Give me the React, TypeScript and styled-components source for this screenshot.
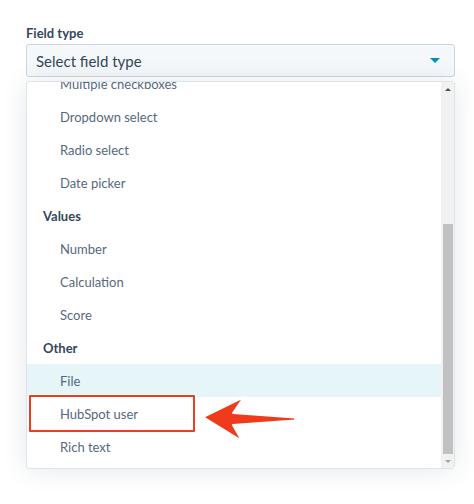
import React from 'react';
import styled, { createGlobalStyle } from 'styled-components';

const GlobalStyle = createGlobalStyle`
  html, body {
    margin: 0;
    padding: 0;
    background: #ffffff;
  }
  body {
    font-family: Lato, "Open Sans", sans-serif;
  }
`;

const Page = styled.div`
  width: 474px;
  height: 504px;
  padding: 25px 19px 0 26px;
  box-sizing: border-box;
  display: flex;
  flex-direction: column;
`;

const Label = styled.div`
  font-size: 13px;
  font-weight: 700;
  color: #33475b;
  line-height: 16px;
  margin-bottom: 3px;
`;

const SelectBox = styled.div`
  height: 33px;
  box-sizing: border-box;
  border: 1px solid #cbd6e2;
  border-radius: 3px;
  background: #f5f8fa;
  display: flex;
  align-items: center;
  justify-content: space-between;
  padding: 0 14px 0 9px;
  font-size: 15px;
  color: #33475b;
`;

const Caret = styled.span`
  width: 0;
  height: 0;
  border-left: 5px solid transparent;
  border-right: 5px solid transparent;
  border-top: 5px solid #0091ae;
`;

const Dropdown = styled.div`
  margin-top: 4px;
  height: 388px;
  box-sizing: border-box;
  border: 1px solid #dfe3eb;
  border-radius: 3px;
  background: #ffffff;
  box-shadow: 0 1px 24px rgba(45, 62, 80, 0.12);
  display: flex;
`;

const List = styled.ul`
  flex: 1;
  list-style: none;
  margin: 0;
  padding: 0;
  overflow: hidden;
`;

const Group = styled.li`
  height: 33px;
  display: flex;
  align-items: center;
  padding-left: 16px;
  font-size: 13px;
  font-weight: 700;
  color: #33475b;
`;

const Option = styled.li<{ $active?: boolean; $first?: boolean }>`
  position: relative;
  height: 33px;
  display: flex;
  align-items: center;
  padding-left: 33px;
  margin-top: ${p => (p.$first ? '-15px' : '0')};
  font-size: 13px;
  color: #56697f;
  background: ${p => (p.$active ? '#e5f5f8' : 'transparent')};
`;

const Marker = styled.span`
  position: absolute;
  left: 2px;
  top: -2px;
  width: 166px;
  height: 37px;
  box-sizing: border-box;
  border: 2px solid #ec3e1e;
  border-radius: 1px;
  box-shadow: 0 0 0 1px rgba(255, 255, 255, 0.8);
`;

const Pointer = styled.svg`
  position: absolute;
  left: 170px;
  top: -6px;
  overflow: visible;
`;

const Scrollbar = styled.div`
  width: 13px;
  background: #f1f1f1;
  display: flex;
  flex-direction: column;
  align-items: center;
`;

const ScrollArrow = styled.span<{ $down?: boolean }>`
  height: 14px;
  display: flex;
  align-items: center;
  justify-content: center;
  &::after {
    content: '';
    border-left: 3px solid transparent;
    border-right: 3px solid transparent;
    ${p =>
      p.$down
        ? 'border-top: 3px solid #a3a3a3;'
        : 'border-bottom: 3px solid #505050;'}
  }
`;

const Track = styled.div`
  flex: 1;
  width: 100%;
  display: flex;
  flex-direction: column;
  justify-content: flex-end;
  align-items: center;
`;

const Thumb = styled.div`
  width: 10px;
  background: #c1c1c1;
`;

type Item = { label: string; kind: 'group' | 'option'; active?: boolean; marked?: boolean };

// list is shown scrolled to the bottom, so it starts half way through "Multiple checkboxes"
const items: Item[] = [
  { label: 'Multiple checkboxes', kind: 'option' },
  { label: 'Dropdown select', kind: 'option' },
  { label: 'Radio select', kind: 'option' },
  { label: 'Date picker', kind: 'option' },
  { label: 'Values', kind: 'group' },
  { label: 'Number', kind: 'option' },
  { label: 'Calculation', kind: 'option' },
  { label: 'Score', kind: 'option' },
  { label: 'Other', kind: 'group' },
  { label: 'File', kind: 'option', active: true },
  { label: 'HubSpot user', kind: 'option', marked: true },
  { label: 'Rich text', kind: 'option' },
];

const Arrow: React.FC = () => (
  <Pointer width="100" height="52" viewBox="0 0 100 52">
    <polygon
      points="6,26 47,6 36,22 98,26.5 98,29.5 36,34 45,50"
      fill="#ef3b1c"
      stroke="#ffffff"
      strokeWidth="2"
      strokeLinejoin="round"
    />
  </Pointer>
);

const App: React.FC = () => {
  return (
    <>
      <GlobalStyle />
      <Page>
        <Label>Field type</Label>
        <SelectBox>
          <span>Select field type</span>
          <Caret />
        </SelectBox>
        <Dropdown>
          <List>
            {items.map((item, i) =>
              item.kind === 'group' ? (
                <Group key={item.label}>{item.label}</Group>
              ) : (
                <Option key={item.label} $active={item.active} $first={i === 0}>
                  {item.label}
                  {item.marked && (
                    <>
                      <Marker />
                      <Arrow />
                    </>
                  )}
                </Option>
              )
            )}
          </List>
          <Scrollbar>
            <ScrollArrow />
            <Track>
              <Thumb style={{ height: 230 }} />
            </Track>
            <ScrollArrow $down />
          </Scrollbar>
        </Dropdown>
      </Page>
    </>
  );
};

export default App;
